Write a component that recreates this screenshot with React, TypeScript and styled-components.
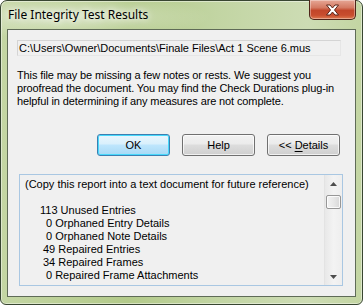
import React from "react";
import styled, { createGlobalStyle } from "styled-components";

const GlobalStyle = createGlobalStyle`
  html, body {
    margin: 0;
    padding: 0;
    background: #ffffff;
  }
`;

const reportLines: { text: string; indent: number }[] = [
  { text: "113 Unused Entries", indent: 15 },
  { text: "0 Orphaned Entry Details", indent: 21 },
  { text: "0 Orphaned Note Details", indent: 21 },
  { text: "49 Repaired Entries", indent: 18 },
  { text: "34 Repaired Frames", indent: 18 },
  { text: "0 Repaired Frame Attachments", indent: 21 },
];

export default function App() {
  return (
    <>
      <GlobalStyle />
      <Window>
        <TitleBar>
          <Title>File Integrity Test Results</Title>
          <CloseButton>
            <svg width="15" height="12" viewBox="0 0 15 12">
              <path
                d="M1.5 1 H5 L7.5 4 L10 1 H13.5 L9.5 6 L13.5 11 H10 L7.5 8 L5 11 H1.5 L5.5 6 Z"
                fill="#ffffff"
                stroke="#5b2418"
                strokeWidth="1"
                strokeLinejoin="round"
              />
            </svg>
          </CloseButton>
        </TitleBar>
        <Client>
          <PathField>C:\Users\Owner\Documents\Finale Files\Act 1 Scene 6.mus</PathField>
          <Message>
            This file may be missing a few notes or rests. We suggest you
            proofread the document. You may find the Check Durations plug-in
            helpful in determining if any measures are not complete.
          </Message>
          <ButtonRow>
            <PushButton $primary>OK</PushButton>
            <PushButton>Help</PushButton>
            <PushButton>
              <span>
                &lt;&lt;&nbsp;<u>D</u>etails
              </span>
            </PushButton>
          </ButtonRow>
          <ReportBox>
            <ReportText>
              <ReportLine $indent={0}>
                (Copy this report into a text document for future reference)
              </ReportLine>
              <ReportLine $indent={0}>&nbsp;</ReportLine>
              {reportLines.map((l) => (
                <ReportLine key={l.text} $indent={l.indent}>
                  {l.text}
                </ReportLine>
              ))}
            </ReportText>
            <ScrollBar>
              <Arrow>
                <svg width="7" height="4" viewBox="0 0 7 4">
                  <path d="M0 4 L3.5 0 L7 4 Z" fill="#4d4d4d" />
                </svg>
              </Arrow>
              <Thumb />
              <Track />
              <Arrow>
                <svg width="7" height="4" viewBox="0 0 7 4">
                  <path d="M0 0 L3.5 4 L7 0 Z" fill="#4d4d4d" />
                </svg>
              </Arrow>
            </ScrollBar>
          </ReportBox>
        </Client>
      </Window>
    </>
  );
}

const Window = styled.div`
  box-sizing: border-box;
  width: 363px;
  height: 305px;
  display: flex;
  flex-direction: column;
  padding: 0 6px 7px 6px;
  border: 1px solid #384631;
  border-radius: 7px 7px 6px 6px;
  background:
    radial-gradient(ellipse 140px 22px at 70px 16px, rgba(255, 255, 255, 0.45), rgba(255, 255, 255, 0) 100%),
    linear-gradient(90deg, #c4d6a4 0%, #b3ca8a 35%, #c2d5a3 60%, #cddcb4 85%, #c3d5a2 100%);
  box-shadow: inset 0 0 0 1px rgba(255, 255, 255, 0.45);
`;

const TitleBar = styled.div`
  height: 28px;
  display: flex;
  align-items: flex-start;
`;

const Title = styled.span`
  margin-top: 6px;
  padding-left: 1px;
  font-family: "Noto Sans", "Open Sans", sans-serif;
  font-size: 12px;
  line-height: 16px;
  color: #000000;
  text-shadow: 0 0 6px #ffffff, 0 0 10px rgba(255, 255, 255, 0.9);
`;

const CloseButton = styled.div`
  box-sizing: border-box;
  margin-left: auto;
  margin-top: -1px;
  width: 47px;
  height: 20px;
  display: flex;
  align-items: center;
  justify-content: center;
  border: 1px solid #4e2419;
  border-top: none;
  border-radius: 0 0 5px 5px;
  background: linear-gradient(180deg, #e6a796 0%, #d47a63 40%, #c2462a 55%, #c84d2e 80%, #dd7a50 100%);
  box-shadow: inset 0 0 0 1px rgba(255, 255, 255, 0.35);
`;

const Client = styled.div`
  flex: 1;
  display: flex;
  flex-direction: column;
  border: 1px solid #5f6b57;
  background: #f0f0f0;
  padding: 10px 0 0 9px;
  font-family: "Liberation Sans", Arial, sans-serif;
  font-size: 11px;
  color: #000000;
`;

const PathField = styled.div`
  box-sizing: border-box;
  width: 324px;
  height: 16px;
  padding-left: 1px;
  border: 1px solid #d4d4d4;
  border-right-color: #e6e6e6;
  border-bottom-color: #e6e6e6;
  line-height: 14px;
  white-space: nowrap;
`;

const Message = styled.p`
  margin: 13px 0 0 0;
  width: 325px;
  line-height: 13px;
  letter-spacing: -0.12px;
`;

const ButtonRow = styled.div`
  display: flex;
  gap: 12px;
  margin-top: 26px;
  margin-left: 80px;
`;

const PushButton = styled.div<{ $primary?: boolean }>`
  box-sizing: border-box;
  width: 73px;
  height: 22px;
  display: flex;
  align-items: center;
  justify-content: center;
  border-radius: 3px;
  border: 1px solid ${(p) => (p.$primary ? "#3c7fb1" : "#707070")};
  background: ${(p) =>
    p.$primary
      ? "linear-gradient(180deg, #eaf6fd 0%, #d9f0fc 45%, #bee6fd 50%, #a7d9f5 100%)"
      : "linear-gradient(180deg, #f2f2f2 0%, #ebebeb 45%, #dddddd 50%, #cfcfcf 100%)"};
  box-shadow: inset 0 0 0 1px ${(p) => (p.$primary ? "#48d8fb" : "rgba(255,255,255,0.7)")};
  u {
    text-decoration-thickness: 1px;
    text-underline-offset: 2px;
  }
`;

const ReportBox = styled.div`
  box-sizing: border-box;
  display: flex;
  width: 324px;
  height: 112px;
  margin-top: 18px;
  margin-left: 2px;
  border: 1px solid #a9c7e2;
  background: #f0f0f0;
`;

const ReportText = styled.div`
  flex: 1;
  padding: 3px 0 0 5px;
  overflow: hidden;
`;

const ReportLine = styled.div<{ $indent: number }>`
  padding-left: ${(p) => p.$indent}px;
  line-height: 13px;
  height: 13px;
  white-space: nowrap;
`;

const ScrollBar = styled.div`
  width: 17px;
  display: flex;
  flex-direction: column;
  align-items: center;
  background: linear-gradient(90deg, #e8e8e8 0%, #f3f3f3 50%, #eeeeee 100%);
  border-left: 1px solid #e3e3e3;
`;

const Arrow = styled.div`
  height: 17px;
  width: 100%;
  display: flex;
  align-items: center;
  justify-content: center;
`;

const Thumb = styled.div`
  box-sizing: border-box;
  width: 15px;
  height: 14px;
  margin-top: 3px;
  border: 1px solid #979797;
  border-radius: 2px;
  background: linear-gradient(90deg, #f3f3f3 0%, #e8e8e8 50%, #d8d8d8 100%);
  box-shadow: inset 0 0 0 1px rgba(255, 255, 255, 0.8);
`;

const Track = styled.div`
  flex: 1;
`;
